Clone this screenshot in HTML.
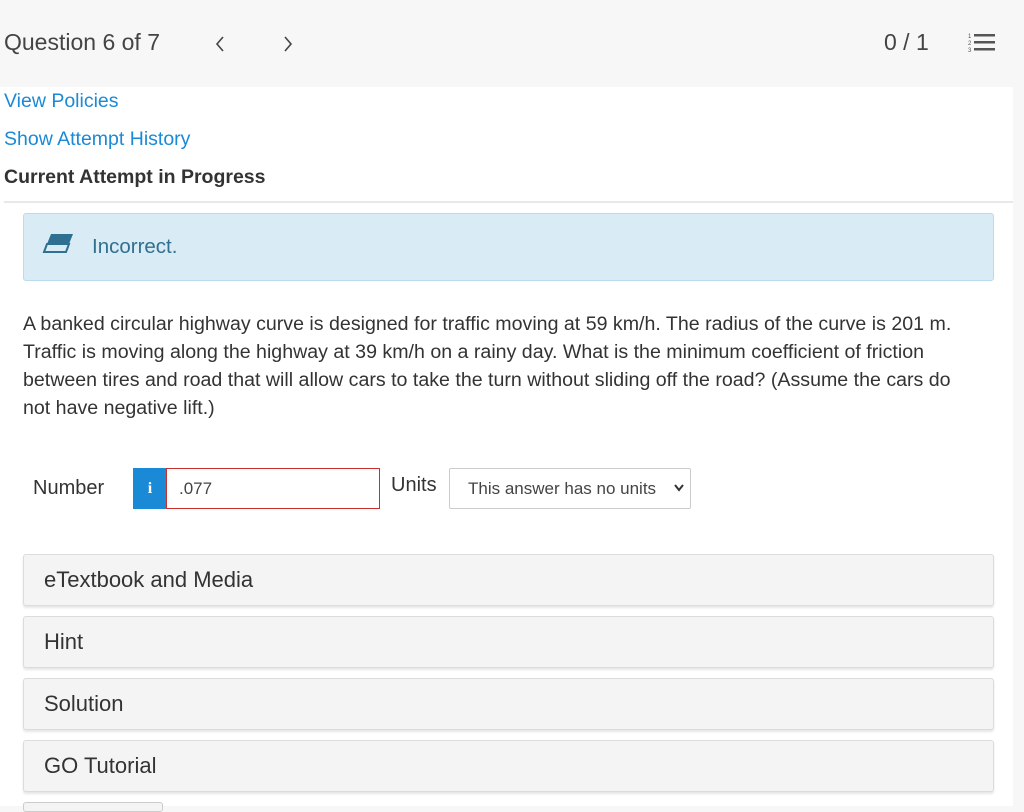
<!DOCTYPE html>
<html><head><style>
*{margin:0;padding:0;box-sizing:border-box}
body{width:1024px;height:806px;overflow:hidden;background:#f7f7f7;font-family:"Liberation Sans",sans-serif;color:#333;position:relative}
.hdr{position:absolute;left:0;top:0;width:1024px;height:87px;background:#f7f7f7}
.abs{position:absolute;white-space:nowrap}
.main{position:absolute;left:0;top:87px;width:1013px;height:719px;background:#fff}
.link{color:#1a8ad6;font-size:19.5px}
.alert{position:absolute;left:23px;top:213px;width:971px;height:68px;background:#d9ecf5;border:1px solid #b9dced;border-radius:3px}
.q{position:absolute;left:23px;top:310px;font-size:19.6px;line-height:28px;color:#333;white-space:nowrap}
.acc{position:absolute;left:23px;width:971px;height:52px;background:#f4f4f4;border:1px solid #dcdcdc;border-radius:3px;box-shadow:0 2px 2px rgba(0,0,0,.1);font-size:22px;padding-left:20px;line-height:50px;color:#333}
</style></head><body>
<div class="hdr"></div>
<div class="abs" style="left:4px;top:29px;font-size:23px;color:#444">Question 6 of 7</div>
<svg class="abs" style="left:214px;top:35px" width="12" height="18"><path d="M9 2 L3 9 L9 16" stroke="#444" stroke-width="1.6" fill="none"/></svg>
<svg class="abs" style="left:282px;top:35px" width="12" height="18"><path d="M3 2 L9 9 L3 16" stroke="#444" stroke-width="1.6" fill="none"/></svg>
<div class="abs" style="left:884px;top:29px;font-size:23px;color:#444">0 / 1</div>
<svg class="abs" style="left:968px;top:32px" width="28" height="22"><text x="0" y="6" font-size="6" fill="#555" font-family="Liberation Sans">1</text><text x="0" y="13" font-size="6" fill="#555" font-family="Liberation Sans">2</text><text x="0" y="20" font-size="6" fill="#555" font-family="Liberation Sans">3</text><rect x="6" y="2" width="21" height="2.5" fill="#555"/><rect x="6" y="9" width="21" height="2.5" fill="#555"/><rect x="6" y="16" width="21" height="2.5" fill="#555"/></svg>
<div class="main"></div>
<div class="abs link" style="left:4px;top:90px">View Policies</div>
<div class="abs link" style="left:4px;top:128px">Show Attempt History</div>
<div class="abs" style="left:4px;top:166px;font-size:19.5px;font-weight:bold;color:#333">Current Attempt in Progress</div>
<div class="abs" style="left:4px;top:201px;width:1009px;height:2px;background:#e8e8e8"></div>
<div class="alert"></div>
<svg class="abs" style="left:41px;top:232px" width="34" height="22"><path d="M10 2 L32 2 L28 12 L6 12 Z" fill="#2f6f8f"/><path d="M6 12 L28 12 L25 20 L3 20 Z" fill="none" stroke="#2f6f8f" stroke-width="2"/></svg>
<div class="abs" style="left:92px;top:235px;font-size:20.5px;color:#31708f">Incorrect.</div>
<div class="q">A banked circular highway curve is designed for traffic moving at 59 km/h. The radius of the curve is 201 m.<br>Traffic is moving along the highway at 39 km/h on a rainy day. What is the minimum coefficient of friction<br>between tires and road that will allow cars to take the turn without sliding off the road? (Assume the cars do<br>not have negative lift.)</div>
<div class="abs" style="left:33px;top:477px;font-size:20px;color:#333">Number</div>
<div class="abs" style="left:133px;top:468px;width:34px;height:41px;background:#1a8ad6;color:#fff;font-weight:bold;font-size:16px;text-align:center;line-height:41px;font-family:'Liberation Serif',serif">i</div>
<div class="abs" style="left:166px;top:468px;width:214px;height:41px;border:1px solid #c9302c;font-size:17px;padding-left:12px;line-height:39px;color:#444">.077</div>
<div class="abs" style="left:391px;top:474px;font-size:20px;color:#333">Units</div>
<div class="abs" style="left:449px;top:468px;width:242px;height:41px;border:1px solid #ccc;border-radius:2px;font-size:17px;padding-left:18px;line-height:39px;color:#444">This answer has no units</div>
<svg class="abs" style="left:673px;top:483px" width="12" height="10"><path d="M2 2 L6 7 L10 2" stroke="#333" stroke-width="2" fill="none"/></svg>
<div class="acc" style="top:554px">eTextbook and Media</div>
<div class="acc" style="top:616px">Hint</div>
<div class="acc" style="top:678px">Solution</div>
<div class="acc" style="top:740px">GO Tutorial</div>
<div class="abs" style="left:23px;top:802px;width:140px;height:10px;border:1px solid #ccc;border-radius:3px;background:#f4f4f4"></div>
</body></html>
